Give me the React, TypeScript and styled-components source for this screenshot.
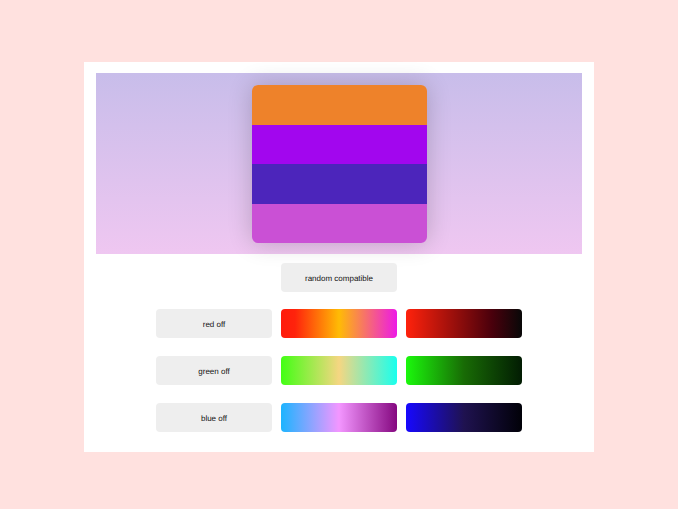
import React from "react";
import styled, { createGlobalStyle } from "styled-components";

const GlobalStyle = createGlobalStyle`
  * { box-sizing: border-box; }
  body {
    margin: 0;
    background: #ffe1df;
    font-family: "Liberation Sans", Arial, sans-serif;
  }
`;

const Page = styled.main`
  min-height: 100vh;
  padding: 62px 84px;
`;

const Panel = styled.section`
  padding: 11px 12px 20px;
  background: #fff;
`;

const Hero = styled.div`
  display: flex;
  justify-content: center;
  padding: 12px 12px 11px;
  background: linear-gradient(#c8bdea, #efc7f1);
`;

const Palette = styled.div`
  display: flex;
  flex-direction: column;
  width: 175px;
  height: 158px;
  overflow: hidden;
  border-radius: 6px;
  box-shadow: 0 0 24px rgba(0, 0, 0, 0.2);
`;

const Stripe = styled.div<{ $color: string }>`
  flex: 1;
  background: ${({ $color }) => $color};
`;

const Controls = styled.div`
  display: flex;
  flex-direction: column;
  align-items: center;
  gap: 17px;
  margin-top: 9px;
`;

const Channels = styled.div`
  display: flex;
  flex-direction: column;
  gap: 18px;
`;

const Row = styled.div`
  display: flex;
  justify-content: center;
  gap: 9px;
`;

const Button = styled.button<{ $fill?: string }>`
  width: 116px;
  height: 29px;
  padding: 1px 0 0;
  border: 0;
  border-radius: 4px;
  background: ${({ $fill }) => $fill ?? "#eee"};
  color: #111;
  font-family: inherit;
  font-size: 8px;
  text-rendering: geometricPrecision;
  cursor: pointer;
`;

const stripes = ["#ee822a", "#a206ee", "#4c25bb", "#ca50d5"];

const channels = [
  {
    name: "red",
    hue: "linear-gradient(90deg, #ff1b0c, #ff230c 12%, #ffbb05 50%, #ed19e6)",
    shade: "linear-gradient(90deg, #ff220c, #4a000c 74%, #080808)",
  },
  {
    name: "green",
    hue: "linear-gradient(90deg, #42ff14, #f5d682 50%, #19ffed)",
    shade: "linear-gradient(90deg, #1bf80c, #186b05 50%, #021c03)",
  },
  {
    name: "blue",
    hue: "linear-gradient(90deg, #1cb4ff, #f396ff 50%, #850880)",
    shade: "linear-gradient(90deg, #1708ff, #1f1250 50%, #010108)",
  },
];

export default function App() {
  return (
    <>
      <GlobalStyle />
      <Page>
        <Panel>
          <Hero>
            <Palette>
              {stripes.map((color) => (
                <Stripe key={color} $color={color} />
              ))}
            </Palette>
          </Hero>
          <Controls>
            <Button type="button">random compatible</Button>
            <Channels>
              {channels.map(({ name, hue, shade }) => (
                <Row key={name}>
                  <Button type="button">{name} off</Button>
                  <Button type="button" $fill={hue} aria-label={`${name} hue`} />
                  <Button type="button" $fill={shade} aria-label={`${name} shade`} />
                </Row>
              ))}
            </Channels>
          </Controls>
        </Panel>
      </Page>
    </>
  );
}
